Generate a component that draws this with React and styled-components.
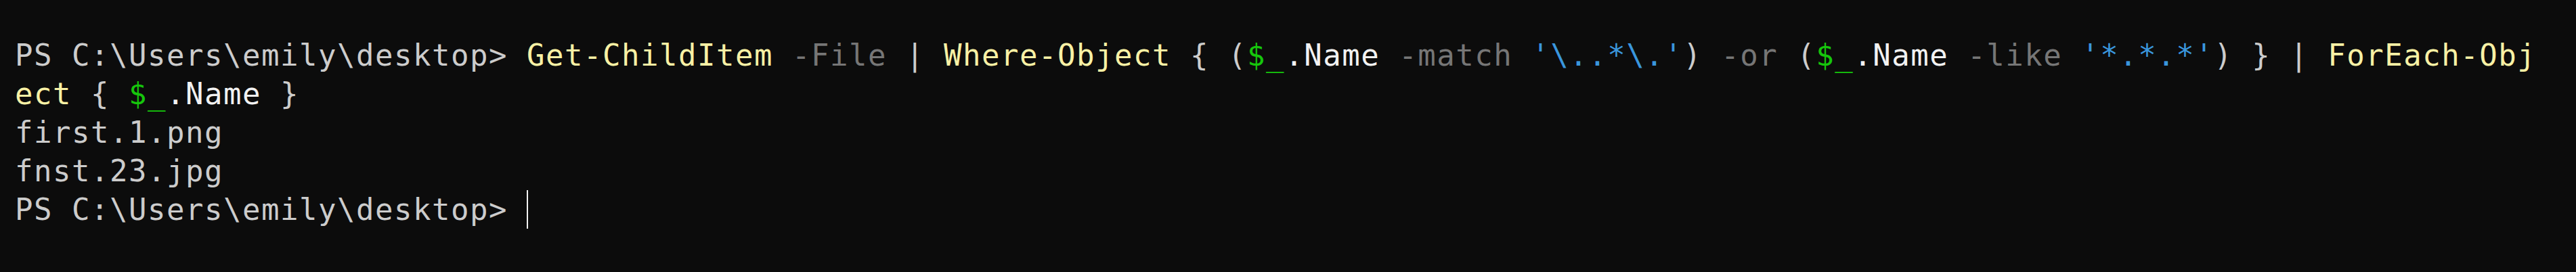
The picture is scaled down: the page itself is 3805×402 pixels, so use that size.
import React from "react";
import styled, { createGlobalStyle } from "styled-components";

const GlobalStyle = createGlobalStyle`
  html, body {
    margin: 0;
    padding: 0;
    background: #0c0c0c;
  }
`;

const colors = {
  fg: "#cccccc",
  command: "#f9f1a5",
  param: "#767676",
  variable: "#16c60c",
  member: "#f2f2f2",
  string: "#3a96dd",
};

const Terminal = styled.div`
  width: 3805px;
  height: 402px;
  box-sizing: border-box;
  padding: 53px 0 0 22px;
  background: #0c0c0c;
  color: ${colors.fg};
  font-family: "DejaVu Sans Mono", "Liberation Mono", monospace;
  font-size: 44px;
  letter-spacing: 1.51px;
  line-height: 57px;
  overflow: hidden;
`;

const Line = styled.div`
  height: 57px;
  white-space: pre;
  display: flex;
  align-items: stretch;
`;

const Tok = styled.span`
  color: ${(p) => colors[p.$kind] || colors.fg};
`;

const Cursor = styled.span`
  display: inline-block;
  width: 2px;
  height: 57px;
  background: #f2f2f2;
`;

const PROMPT = "PS C:\\Users\\emily\\desktop> ";

const lines = [
  [
    ["fg", PROMPT],
    ["command", "Get-ChildItem"],
    ["fg", " "],
    ["param", "-File"],
    ["fg", " | "],
    ["command", "Where-Object"],
    ["fg", " { ("],
    ["variable", "$_"],
    ["member", ".Name"],
    ["fg", " "],
    ["param", "-match"],
    ["fg", " "],
    ["string", "'\\..*\\.'"],
    ["fg", ") "],
    ["param", "-or"],
    ["fg", " ("],
    ["variable", "$_"],
    ["member", ".Name"],
    ["fg", " "],
    ["param", "-like"],
    ["fg", " "],
    ["string", "'*.*.*'"],
    ["fg", ") } | "],
    ["command", "ForEach-Obj"],
  ],
  [
    ["command", "ect"],
    ["fg", " { "],
    ["variable", "$_"],
    ["member", ".Name"],
    ["fg", " }"],
  ],
  [["fg", "first.1.png"]],
  [["fg", "fnst.23.jpg"]],
];

const App = () => (
  <>
    <GlobalStyle />
    <Terminal>
      {lines.map((toks, i) => (
        <Line key={i}>
          {toks.map(([kind, text], j) => (
            <Tok key={j} $kind={kind}>
              {text}
            </Tok>
          ))}
        </Line>
      ))}
      <Line>
        <Tok $kind="fg">{PROMPT}</Tok>
        <Cursor />
      </Line>
    </Terminal>
  </>
);

export default App;
